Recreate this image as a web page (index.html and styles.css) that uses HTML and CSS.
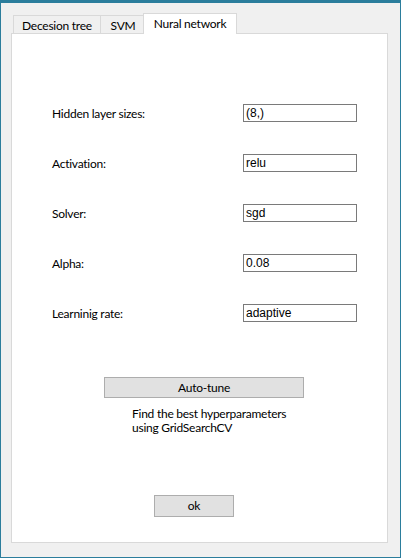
FILE: index.html
```html
<!DOCTYPE html>
<html>
<head>
<meta charset="utf-8">
<link rel="stylesheet" href="styles.css">
</head>
<body>
<div class="window">
  <div class="tabs">
    <div class="tab tab-tree">Decesion tree</div>
    <div class="tab tab-svm">SVM</div>
    <div class="tab active">Nural network</div>
  </div>
  <div class="panel">
    <div class="rows">
      <div class="row"><span class="label">Hidden layer sizes:</span><div class="field">(8,)</div></div>
      <div class="row"><span class="label">Activation:</span><div class="field">relu</div></div>
      <div class="row"><span class="label">Solver:</span><div class="field">sgd</div></div>
      <div class="row"><span class="label">Alpha:</span><div class="field">0.08</div></div>
      <div class="row"><span class="label">Learninig rate:</span><div class="field">adaptive</div></div>
    </div>
    <div class="btn autotune">Auto-tune</div>
    <div class="desc">Find the best hyperparameters<br>using GridSearchCV</div>
    <div class="btn ok">ok</div>
  </div>
</div>
</body>
</html>
```
FILE: styles.css
```css
html, body {
  margin: 0;
  padding: 0;
}
body {
  font-family: Lato, "Noto Sans", sans-serif;
  font-size: 12px;
  letter-spacing: -0.25px;
  color: #000;
}
.window {
  width: 401px;
  height: 558px;
  box-sizing: border-box;
  background: #f0f0f0;
  border: 1px solid #2b7d9c;
  border-top-width: 3px;
  padding: 10px 0 0 10px;
}
.tabs {
  display: flex;
  height: 20px;
  padding-left: 2px;
  align-items: flex-end;
  position: relative;
  z-index: 1;
}
.tab {
  box-sizing: border-box;
  height: 18px;
  border: 1px solid #d9d9d9;
  border-bottom: none;
  border-right: none;
  background: #f0f0f0;
  text-align: center;
  padding-top: 1px;
  line-height: 17px;
}
.tab-tree {
  width: 87px;
}
.tab-svm {
  width: 45px;
}
.tab.active {
  width: 94px;
  height: 21px;
  background: #fff;
  border-right: 1px solid #d9d9d9;
  margin: 0 0 -1px -2px;
  padding-top: 0;
  line-height: 20px;
}
.panel {
  box-sizing: border-box;
  width: 377px;
  height: 510px;
  background: #fff;
  border: 1px solid #d9d9d9;
  padding: 70px 0 0 40px;
}
.rows {
  display: flex;
  flex-direction: column;
  gap: 32px;
}
.row {
  display: flex;
  align-items: center;
  height: 18px;
}
.label {
  width: 191px;
}
.field {
  box-sizing: border-box;
  width: 114px;
  height: 18px;
  border: 1px solid #7a7a7a;
  padding-left: 2px;
  font-family: "Liberation Sans", Arial, sans-serif;
  font-size: 12px;
  letter-spacing: 0;
  line-height: 16px;
}
.btn {
  box-sizing: border-box;
  background: #e1e1e1;
  border: 1px solid #adadad;
  text-align: center;
}
.autotune {
  width: 200px;
  height: 21px;
  line-height: 19px;
  margin: 55px 0 0 52px;
}
.desc {
  margin: 9px 0 0 80px;
  line-height: 14px;
}
.ok {
  width: 80px;
  height: 22px;
  line-height: 20px;
  margin: 60px 0 0 102px;
}
```
